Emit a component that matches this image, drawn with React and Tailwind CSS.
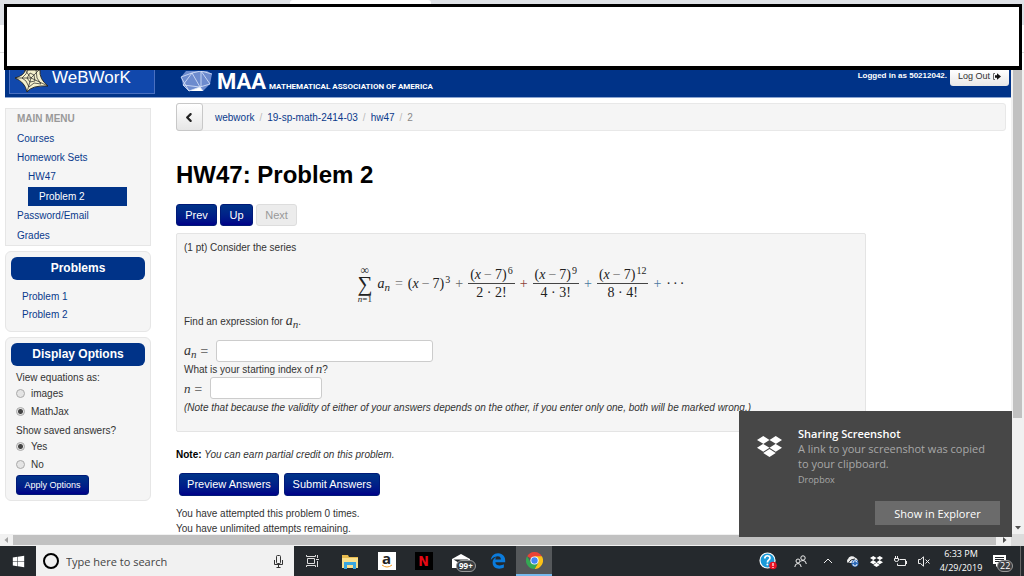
import React from "react";
import { FaWindows, FaDropbox, FaChevronLeft, FaEdgeLegacy } from "react-icons/fa6";

const link = "text-[#0a3a8c] hover:underline";
const primary =
  "rounded-[3px] border border-[#001a78] bg-linear-to-b from-[#003388] to-[#000088] text-white";

function Var({ children }) {
  return <i className="font-['Liberation_Serif',serif] text-[13px] leading-none">{children}</i>;
}

function An() {
  return (
    <span className="font-['Liberation_Serif',serif] text-[14px] italic leading-none">
      a<sub className="text-[11px]">n</sub>
    </span>
  );
}

function Power({ exp }) {
  return (
    <span className="flex whitespace-nowrap">
      <span>
        (<i>x</i>
      </span>
      <span className="px-[3px] text-[#777]">−</span>
      <span>7)</span>
      <span className="-mt-1 pl-px text-[10px]">{exp}</span>
    </span>
  );
}

function Fraction({ exp, den }) {
  return (
    <span className="flex flex-col items-center">
      <span className="flex h-[17px] items-center border-b border-[#444] px-[2px] pb-px">
        <Power exp={exp} />
      </span>
      <span className="flex h-[17px] items-center">{den}</span>
    </span>
  );
}

function Series() {
  return (
    <div className="flex h-9 items-center justify-center gap-[5px] font-['Liberation_Serif',serif] text-[14px] leading-[14px] text-[#222]">
      <span className="flex flex-col items-center text-[9px] leading-[8px]">
        <span className="text-[12px]">∞</span>
        <span className="text-[21px] leading-[21px]">∑</span>
        <span>
          <i>n</i>=1
        </span>
      </span>
      <An />
      <span className="text-[#777]">=</span>
      <Power exp="3" />
      <span className="text-[#666]">+</span>
      <Fraction exp="6" den="2 · 2!" />
      <span className="text-[#8a4038]">+</span>
      <Fraction exp="9" den="4 · 3!" />
      <span className="text-[#4a78a0]">+</span>
      <Fraction exp="12" den="8 · 4!" />
      <span className="text-[#4a78a0]">+</span>
      <span className="flex gap-[2px]">
        <span>·</span>
        <span>·</span>
        <span>·</span>
      </span>
    </div>
  );
}

function RadioRow({ name, label, checked }) {
  return (
    <label className="flex h-[18px] items-center gap-[6px]">
      <input
        type="radio"
        name={name}
        defaultChecked={checked}
        className="size-[9px] appearance-none rounded-full border border-[#aaa] bg-[#e4e4e4] checked:bg-[radial-gradient(circle,#444_0_2px,#e4e4e4_3px)]"
      />
      {label}
    </label>
  );
}

function Header() {
  return (
    <header className="ml-[5px] flex h-7 items-start border-b border-[#8aa4d0] bg-[#003388] text-white">
      <a
        href="#home"
        className="ml-1 flex h-6 w-[146px] items-start border border-t-0 border-[#4a70c0] bg-[#1148ac] pl-1"
      >
        <svg width="36" height="23" viewBox="0 0 36 23" className="shrink-0" aria-hidden="true">
          <g stroke="#222" strokeWidth="0.9" strokeLinejoin="round">
            <path d="M11 0Q11 5 1 8Q11 12 13 22Q18 15 34 16Q25 9 26 0Z" fill="#f4f0cc" />
            <path
              d="M14 0L12 4L8 8L12 11L15 17L20 13L27 14L23 8L22 0M16 3L13 8L16 12L21 11L20 5ZM1 8L17 8L34 16M13 22L17 8L11 0M17 8L25 0"
              fill="none"
              strokeWidth="0.7"
            />
          </g>
        </svg>
        <span className="ml-[2px] text-[17px] leading-[16px]">WeBWorK</span>
      </a>
      <a href="#maa" className="ml-[25px] flex h-[22px] items-end">
        <svg width="34" height="21" viewBox="0 0 34 21" aria-hidden="true">
          <path d="M6 0H27L32 3L30 13L23 20H9L3 14L1 6Z" fill="#6d8bce" />
          <path d="M9 20L20 16L23 20Z" fill="#fff" />
          <path
            d="M1 6L12 2L21 0L32 3M12 2L3 14L20 16L30 13L21 0V16M12 2L20 16M1 6L9 20M3 14L9 20L20 16L23 20"
            fill="none"
            stroke="#dce6fa"
            strokeWidth="0.8"
          />
        </svg>
        <span className="ml-[3px] font-['Roboto',sans-serif] text-[22px] font-bold leading-[20px]">
          MAA
        </span>
        <span className="ml-[3px] whitespace-nowrap font-['Roboto',sans-serif] text-[8px] font-bold leading-[10px]">
          MATHEMATICAL ASSOCIATION OF AMERICA
        </span>
      </a>
      <div className="ml-auto flex items-start pr-[2px]">
        <span className="pr-[3px] text-[8px] font-bold leading-[12px]">Logged in as 50212042.</span>
        <button
          type="button"
          className="flex h-4 w-[59px] items-start justify-center gap-[2px] rounded-b-[3px] bg-linear-to-b from-white to-[#e8e8e8] pt-px text-[9px] leading-[11px] text-[#333]"
        >
          Log Out
          <svg width="9" height="9" viewBox="0 0 9 9" className="mt-px" aria-hidden="true">
            <path d="M3 1.500H1.500V7.500H3" fill="none" stroke="#666" />
            <path d="M3 3.300H5V1.300L9 4.500L5 7.700V5.700H3Z" fill="#111" />
          </svg>
        </button>
      </div>
    </header>
  );
}

function Sidebar() {
  return (
    <aside className="flex w-[146px] shrink-0 flex-col gap-[5px] pt-[10px]">
      <nav className="grid h-[138px] grid-rows-7 items-center border border-[#e6e6e6] bg-[#f5f5f5] px-[11px]">
        <h2 className="font-bold text-[#999]">MAIN MENU</h2>
        <a className={link} href="#courses">Courses</a>
        <a className={link} href="#sets">Homework Sets</a>
        <a className={`${link} pl-[11px]`} href="#hw47">HW47</a>
        <a className="ml-[11px] mr-3 flex h-[19px] items-center bg-[#003388] pl-[11px] text-white" href="#p2">
          Problem 2
        </a>
        <a className={link} href="#password">Password/Email</a>
        <a className={link} href="#grades">Grades</a>
      </nav>
      <section className="h-[81px] rounded-[6px] border border-[#e6e6e6] bg-[#f5f5f5] p-[5px]">
        <h2 className="rounded-[6px] bg-[#003388] text-center text-[12px] font-bold leading-[23px] text-white">Problems</h2>
        <div className="flex flex-col pl-[11px] pt-2 leading-[18px]">
          <a className={link} href="#problem1">Problem 1</a>
          <a className={link} href="#problem2">Problem 2</a>
        </div>
      </section>
      <form className="h-[164px] rounded-[6px] border border-[#e6e6e6] bg-[#f5f5f5] p-[5px]">
        <h2 className="rounded-[6px] bg-[#003388] text-center text-[12px] font-bold leading-[23px] text-white">
          Display Options
        </h2>
        <div className="px-[5px] pt-[5px]">
          <fieldset>
            <legend className="leading-[13px]">View equations as:</legend>
            <RadioRow name="mode" label="images" />
            <RadioRow name="mode" label="MathJax" checked />
          </fieldset>
          <fieldset className="mt-1">
            <legend className="leading-[13px]">Show saved answers?</legend>
            <RadioRow name="saved" label="Yes" checked />
            <RadioRow name="saved" label="No" />
          </fieldset>
          <button type="button" className={`${primary} mt-[2px] h-5 w-[73px] text-[9px]`}>Apply Options</button>
        </div>
      </form>
    </aside>
  );
}

function Main() {
  return (
    <main className="min-w-0 flex-1 pt-[5px] pl-[25px] pr-1">
      <div className="mr-px flex h-7 items-center rounded-[3px] border border-[#e8e8e8] bg-[#f5f5f5]">
        <button
          type="button"
          aria-label="Back"
          className="-ml-px flex h-7 w-[27px] items-center justify-center rounded-[3px] border border-[#c8c8c8] bg-linear-to-b from-white to-[#e6e6e6] text-[#222]"
        >
          <FaChevronLeft className="size-[9px]" stroke="currentColor" strokeWidth="60" />
        </button>
        <nav className="flex gap-[5px] pl-3 text-[#bbb]">
          <a className={link} href="#webwork">webwork</a>/
          <a className={link} href="#course">19-sp-math-2414-03</a>/
          <a className={link} href="#hw47">hw47</a>/<span className="text-[#888]">2</span>
        </nav>
      </div>
      <h1 className="pt-[29px] text-[24px] font-bold leading-[30px] text-black">HW47: Problem 2</h1>
      <div className="flex gap-[3px] pt-[14px]">
        <button type="button" className={`${primary} h-[22px] w-[41px] text-[11px]`}>Prev</button>
        <button type="button" className={`${primary} h-[22px] w-[33px] text-[11px]`}>Up</button>
        <button type="button" disabled className="h-[22px] w-[41px] rounded-[3px] border border-[#ddd] bg-[#ececec] text-[11px] text-[#999]">
          Next
        </button>
      </div>
      <section className="mt-[7px] h-[199px] w-[83%] rounded-[2px] border border-[#e4e4e4] bg-[#f5f5f5] px-[7px] pt-[6px]">
        <p className="leading-[15px]">(1 pt) Consider the series</p>
        <div className="pt-[11px]">
          <Series />
        </div>
        <p className="pt-[11px] leading-[17px]">
          Find an expression for <An />.
        </p>
        <div className="flex items-center gap-2 pt-[10px]">
          <label htmlFor="an" className="flex gap-1">
            <An />
            <span className="text-[13px] leading-none text-[#777]">=</span>
          </label>
          <input id="an" type="text" className="h-[22px] w-[217px] rounded-[3px] border border-[#ccc] bg-white px-1" />
        </div>
        <p className="leading-[15px]">
          What is your starting index of <Var>n</Var>?
        </p>
        <div className="flex items-center gap-2">
          <label htmlFor="n" className="flex gap-1">
            <Var>n</Var>
            <span className="text-[13px] leading-none text-[#777]">=</span>
          </label>
          <input id="n" type="text" className="h-[22px] w-28 rounded-[3px] border border-[#ccc] bg-white px-1" />
        </div>
        <p className="whitespace-nowrap pt-px italic leading-[15px]">
          (Note that because the validity of either of your answers depends on the other, if you enter only one, both will be
          marked wrong.)
        </p>
      </section>
      <p className="pt-[15px] leading-[15px]">
        <b className="text-black">Note:</b> <i>You can earn partial credit on this problem.</i>
      </p>
      <div className="flex gap-[5px] pt-[11px] pl-[3px]">
        <button type="button" className={`${primary} h-[23px] w-[100px] text-[11px]`}>Preview Answers</button>
        <button type="button" className={`${primary} h-[23px] w-24 text-[11px]`}>Submit Answers</button>
      </div>
      <p className="pt-[10px] leading-[15px]">
        You have attempted this problem 0 times.
        <br />
        You have unlimited attempts remaining.
      </p>
    </main>
  );
}

function Toast() {
  return (
    <div
      role="status"
      className="absolute bottom-[39px] right-3 flex h-[126px] w-[273px] bg-[#474747] pl-[18px] pr-3 pt-[15px] font-['Open_Sans',sans-serif] text-[11px] leading-[15px] text-[#a8a8a8]"
    >
      <FaDropbox className="mt-2 size-[25px] shrink-0 text-white" />
      <div className="flex flex-1 flex-col pl-4">
        <p className="font-semibold text-white">Sharing Screenshot</p>
        <p>
          A link to your screenshot was copied
          <br />
          to your clipboard.
        </p>
        <p className="pt-px text-[9px]">Dropbox</p>
        <button type="button" className="mt-[14px] h-6 w-[125px] self-end bg-[#6b6b6b] text-white">
          Show in Explorer
        </button>
      </div>
    </div>
  );
}

function TrayIcon({ label, wide, children }) {
  return (
    <button
      type="button"
      aria-label={label}
      className={wide ? "flex w-8 items-center justify-center" : "flex w-6 items-center justify-center"}
    >
      {children}
    </button>
  );
}

const app = "flex w-[37px] items-center justify-center";

function Taskbar() {
  return (
    <footer className="flex h-[30px] shrink-0 bg-[#25292d] font-['Open_Sans',sans-serif] text-white">
      <button type="button" aria-label="Start" className="flex w-9 items-center justify-center">
        <FaWindows className="size-[13px]" />
      </button>
      <label className="flex w-[258px] items-center bg-[#f1f1f1] pl-[7px] pr-[11px]">
        <span className="size-4 shrink-0 rounded-full border-2 border-black" />
        <input
          type="text"
          aria-label="Search"
          placeholder="Type here to search"
          className="ml-[7px] min-w-0 flex-1 bg-transparent text-[11px] placeholder:text-[#444]"
        />
        <svg width="9" height="13" viewBox="0 0 9 13" fill="none" stroke="#333" aria-hidden="true">
          <rect x="2.500" y="0.500" width="4" height="8" rx="1" />
          <path d="M0.500 5V9.500H8.500V5M4.500 9.500V12.500M2.500 12.500H6.500" />
        </svg>
      </label>
      <button type="button" aria-label="Task view" className={app}>
        <svg width="13" height="13" viewBox="0 0 13 13" fill="none" stroke="#ddd" aria-hidden="true">
          <path d="M1.500 3.500H8.500V8.500H1.500ZM0.500 0V1.500H9.500V0M0.500 12V10.500H9.500V12M11.500 0V3M11.500 6V12M10 4.500H13" />
        </svg>
      </button>
      <button type="button" aria-label="File Explorer" className={app}>
        <svg width="18" height="15" viewBox="0 0 18 15" aria-hidden="true">
          <path d="M1 1H7L8 3H17V14H1Z" fill="#e8bb4e" />
          <path d="M1 4H17V14H1Z" fill="#fbe08b" />
          <path d="M3 8H15V15H12V11H6V15H3Z" fill="#3ba7df" />
        </svg>
      </button>
      <button type="button" aria-label="Amazon" className={app}>
        <span className="flex size-[18px] flex-col items-center bg-white text-[15px] font-bold leading-[12px] text-[#222]">
          a
          <svg width="12" height="4" viewBox="0 0 12 4" fill="none" stroke="#f59b23" aria-hidden="true">
            <path d="M1 1Q6 5 11 1" />
          </svg>
        </span>
      </button>
      <button type="button" aria-label="Netflix" className={app}>
        <span className="flex size-[18px] items-center justify-center bg-black font-['DejaVu_Sans_Condensed','Roboto',sans-serif] text-[14px] font-bold leading-[18px] text-[#e50914]">
          N
        </span>
      </button>
      <button type="button" aria-label="Mail" className={`${app} relative`}>
        <svg width="18" height="17" viewBox="0 0 18 17" aria-hidden="true">
          <path d="M0 6L9 1L18 6V15H0Z" fill="#fff" />
          <path d="M1.500 6.500L16.500 6.500L8 10.500Z" fill="#25292d" />
        </svg>
        <span className="absolute left-[14px] top-[14px] rounded-full border border-[#999] bg-[#3b3e41] px-[2px] text-[8px] font-bold leading-[10px]">
          99+
        </span>
      </button>
      <button type="button" aria-label="Edge" className={app}>
        <FaEdgeLegacy className="size-4 text-[#0b7bdc]" />
      </button>
      <button
        type="button"
        aria-label="Chrome"
        className="flex w-9 items-center justify-center border-b-2 border-[#76b9ed] bg-[#55585b]"
      >
        <svg width="17" height="17" viewBox="0 0 24 24" aria-hidden="true">
          <path d="M12 12L1.600 6A12 12 0 0 1 22.400 6Z" fill="#ea4335" />
          <path d="M12 6H22.400A12 12 0 0 1 12 24L17.200 15Z" fill="#fbc116" />
          <path d="M1.600 6A12 12 0 0 0 12 24L17.200 15L12 12L6.800 15Z" fill="#34a853" />
          <circle cx="12" cy="12" r="5.800" fill="#fff" />
          <circle cx="12" cy="12" r="4.500" fill="#4285f4" />
        </svg>
      </button>
      <div className="ml-auto flex">
        <TrayIcon label="Help" wide>
          <svg width="18" height="18" viewBox="0 0 18 18" aria-hidden="true">
            <circle cx="8.500" cy="8.500" r="7.500" fill="#1b9ad8" stroke="#fff" strokeWidth="1.200" />
            <path d="M5.800 6.500C5.800 2.800 11 3 11 6C11 8 8.400 8 8.400 10.500" fill="none" stroke="#fff" strokeWidth="1.700" />
            <circle cx="8.400" cy="12.600" r="1" fill="#fff" />
            <circle cx="14" cy="13.500" r="3.800" fill="#e81123" />
            <path d="M14 11V14M14 15V16" stroke="#fff" strokeWidth="1.200" />
          </svg>
        </TrayIcon>
        <TrayIcon label="People" wide>
          <svg width="13" height="13" viewBox="0 0 13 13" fill="none" stroke="#eee" aria-hidden="true">
            <circle cx="4" cy="6" r="2" />
            <path d="M0.800 12Q1 8.500 4 8.500Q7 8.500 7.200 12M6.500 6.500Q7.500 5.500 9 5.500Q12 5.500 12.300 9" />
            <circle cx="9" cy="3" r="2.200" />
          </svg>
        </TrayIcon>
        <TrayIcon label="Hidden icons">
          <svg width="10" height="6" viewBox="0 0 10 6" fill="none" stroke="#eee" aria-hidden="true">
            <path d="M1 5L5 1L9 5" />
          </svg>
        </TrayIcon>
        <TrayIcon label="OneDrive">
          <svg width="13" height="12" viewBox="0 0 13 12" aria-hidden="true">
            <path d="M2 8A2.500 2.500 0 0 1 2 4A4 3.500 0 0 1 9 2.500Q11.500 3 12 6V8Z" fill="#eee" />
            <path d="M2.500 8Q4 4 9 4" fill="none" stroke="#25292d" />
            <circle cx="9" cy="8.300" r="3.500" fill="#2c69b8" />
            <path d="M7 8A2 2 0 0 1 11 7.500M11 9A2 2 0 0 1 7 9" fill="none" stroke="#fff" strokeWidth="0.900" />
          </svg>
        </TrayIcon>
        <TrayIcon label="Dropbox">
          <FaDropbox className="size-[13px]" />
        </TrayIcon>
        <TrayIcon label="Battery">
          <svg width="13" height="11" viewBox="0 0 13 11" fill="none" stroke="#eee" aria-hidden="true">
            <path d="M5.500 3.500H11.500V9.500H3.500V7.500M12.500 5V8M1.500 0V2M3.500 0V2M0.500 2.500H4.500V4Q4.500 5.500 2.500 5.500Q0.500 5.500 0.500 4Z" />
          </svg>
        </TrayIcon>
        <TrayIcon label="Volume">
          <svg width="12" height="11" viewBox="0 0 12 11" fill="none" stroke="#eee" aria-hidden="true">
            <path d="M0.500 3.500H2.500L5.500 0.800V10.200L2.500 7.500H0.500ZM7.500 3.500L11.500 7.500M11.500 3.500L7.500 7.500" />
          </svg>
        </TrayIcon>
        <div className="flex w-[50px] flex-col items-center pt-px text-[9px] leading-[14px]">
          <span>6:33 PM</span>
          <span>4/29/2019</span>
        </div>
        <button type="button" aria-label="Notifications" className="relative w-[34px]">
          <svg width="13" height="12" viewBox="0 0 13 12" className="ml-[7px]" aria-hidden="true">
            <path d="M0 0H13V9H6L3 12V9H0Z" fill="#fff" />
            <path d="M2 2.500H11M2 4.500H11M2 6.500H8" stroke="#25292d" />
          </svg>
          <span className="absolute left-[11px] top-[14px] rounded-full border border-[#999] bg-[#3b3e41] px-[2px] text-[9px] leading-[10px]">
            22
          </span>
        </button>
        <span className="mr-[3px] w-px bg-[#666]" />
      </div>
    </footer>
  );
}

export default function App() {
  return (
    <div className="relative flex h-screen flex-col overflow-hidden bg-white font-['Liberation_Sans',sans-serif] text-[10px] leading-[15px] text-[#333]">
      <div className="shrink-0 bg-[linear-gradient(#dee1e6_0_25px,#fff_25px_52px,#ddd_52px_53px,#fff_53px)] pl-1 pr-[2px]">
        <div className="ml-[286px] h-1 w-[141px] rounded-t-[3px] bg-white" />
        <div className="h-[66px] border-[3px] border-b-4 border-black bg-white" />
      </div>
      <div className="flex min-h-0 flex-1">
        <div className="min-w-0 flex-1 overflow-hidden">
          <Header />
          <div className="flex pl-[5px]">
            <Sidebar />
            <Main />
          </div>
        </div>
        <div className="flex w-[13px] shrink-0 flex-col items-center justify-between bg-[#f1f1f1] pb-1">
          <div className="h-[348px] w-[9px] bg-[#c1c1c1]" />
          <svg width="6" height="4" viewBox="0 0 6 4" aria-hidden="true">
            <path d="M0 0H6L3 3.500Z" fill="#505050" />
          </svg>
        </div>
      </div>
      <div className="flex h-3 shrink-0 items-center bg-[#f1f1f1]">
        <svg width="13" height="6" viewBox="0 0 13 6" aria-hidden="true">
          <path d="M8 0V6L4.500 3Z" fill="#a3a3a3" />
        </svg>
        <div className="h-[10px] flex-1 bg-[#c1c1c1]" />
        <svg width="15" height="6" viewBox="0 0 15 6" aria-hidden="true">
          <path d="M7 0V6L10.500 3Z" fill="#505050" />
        </svg>
        <div className="h-3 w-[13px] bg-[#dcdcdc]" />
      </div>
      <Toast />
      <Taskbar />
    </div>
  );
}
